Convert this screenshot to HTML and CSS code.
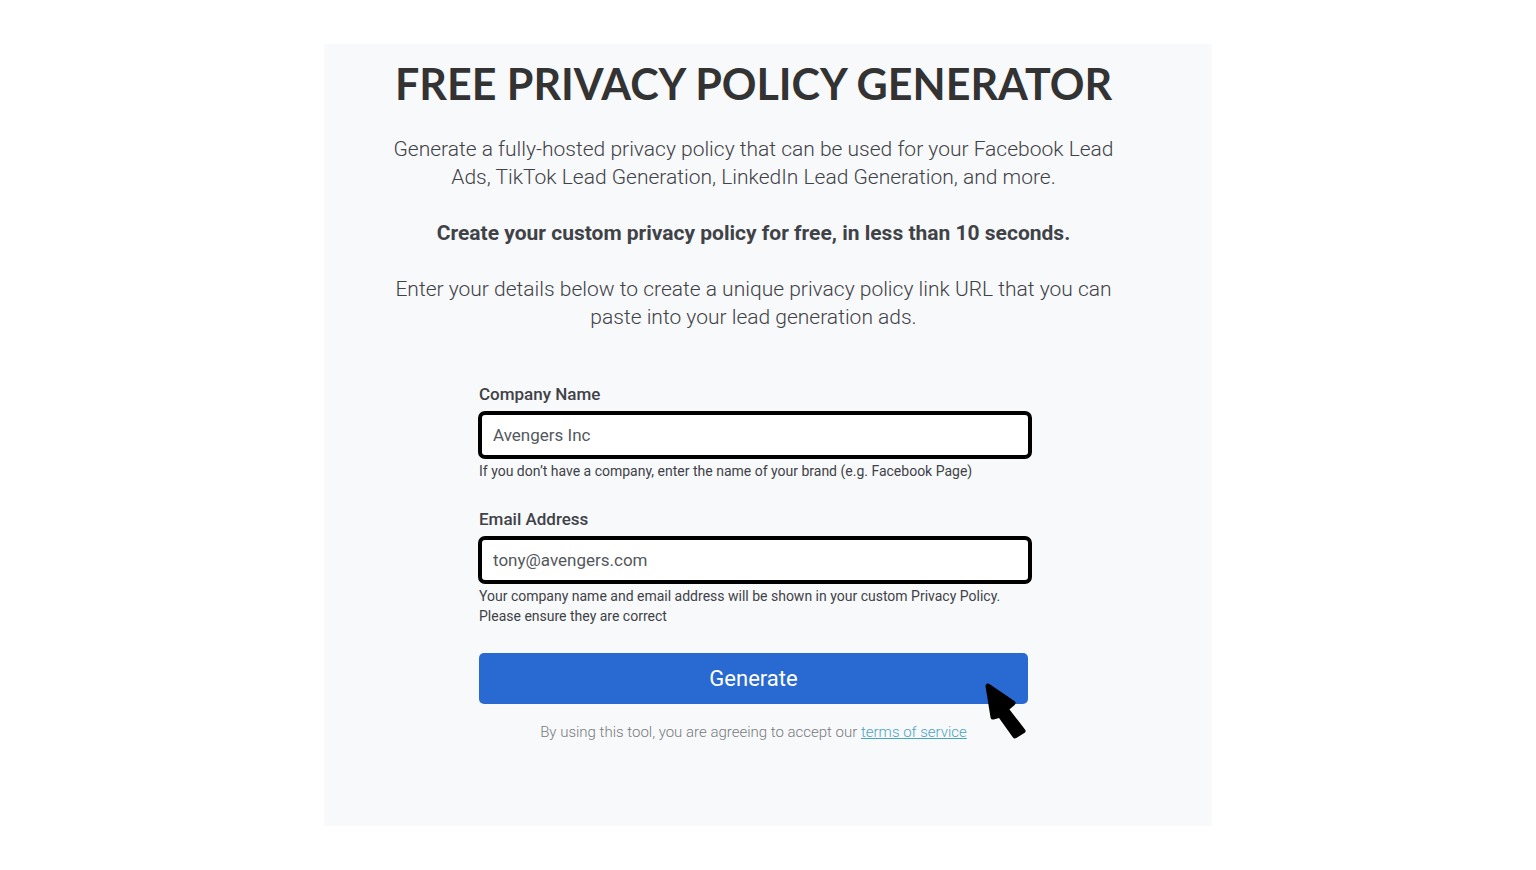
FILE: index.html
```
<!DOCTYPE html>
<html lang="en">
<head>
    <meta charset="UTF-8">
    <meta name="viewport" content="width=device-width, initial-scale=1">
    <title>Free Privacy Policy Generator</title>
    <link rel="stylesheet" href="styles.css">
</head>
<body>
    <main class="panel">
        <h1 class="title">FREE PRIVACY POLICY GENERATOR</h1>
        <div class="intro">
            <p>Generate a fully-hosted privacy policy that can be used for your Facebook Lead Ads, TikTok Lead Generation, LinkedIn Lead Generation, and more.</p>
            <p><strong>Create your custom privacy policy for free, in less than 10 seconds.</strong></p>
            <p>Enter your details below to create a unique privacy policy link URL that you can paste into your lead generation ads.</p>
        </div>
        <form class="form">
            <div class="field">
                <label for="company">Company Name</label>
                <input type="text" id="company" value="Avengers Inc" aria-describedby="company-hint">
                <p class="hint" id="company-hint">If you don’t have a company, enter the name of your brand (e.g. Facebook Page)</p>
            </div>
            <div class="field">
                <label for="email">Email Address</label>
                <input type="email" id="email" value="tony@avengers.com" aria-describedby="email-hint">
                <p class="hint" id="email-hint">Your company name and email address will be shown in your custom Privacy Policy. Please ensure they are correct</p>
            </div>
            <div class="submit">
                <button type="button" class="btn">Generate</button>
                <svg class="pointer" viewBox="0 0 42 56" aria-hidden="true">
                    <path d="M3 3 L28 20 L21 26 L38 48 L30 53 L15 32 L8 34 Z" fill="#000" stroke="#000" stroke-width="5" stroke-linejoin="round"/>
                </svg>
            </div>
            <p class="terms">By using this tool, you are agreeing to accept our <a href="#">terms of service</a></p>
        </form>
    </main>
</body>
</html>
```
FILE: styles.css
```
*{
    box-sizing: border-box;
}

body{
    margin: 0;
    padding: 44px 24px;
    background: #fff;
    color: #3f4247;
    font-family: Roboto, "Liberation Sans", sans-serif;
}

h1, p{
    margin: 0;
}

.panel{
    max-width: 888px;
    margin: 0 auto;
    padding: 14px 89px 82px 60px;
    background: #f8f9fb;
}

/* heading */
.title{
    color: #333;
    font-family: Lato, "Open Sans", sans-serif;
    font-size: 43px;
    font-weight: 700;
    line-height: 52px;
    text-align: center;
}

/* intro text */
.intro{
    margin-top: 25px;
    font-size: 21px;
    font-weight: 350;
    line-height: 28px;
    text-align: center;
}

.intro p + p{
    margin-top: 28px;
}

.intro strong{
    font-weight: 700;
}

/* form */
.form{
    max-width: 549px;
    margin: 51px auto 0;
}

.field{
    margin-bottom: 26px;
}

.field label{
    display: block;
    margin-bottom: 5px;
    font-size: 17px;
    font-weight: 500;
    line-height: 24px;
}

.field input{
    display: block;
    width: calc(100% + 5px);
    height: 48px;
    margin: 0 -4px 2px -1px;
    padding: 0 11px;
    border: 4px solid #000;
    border-radius: 7px;
    background: #fff;
    color: #54585d;
    font-family: inherit;
    font-size: 17px;
}

.hint{
    font-size: 14px;
    line-height: 20px;
}

.submit{
    position: relative;
    margin-top: 27px;
}

.btn{
    display: block;
    width: 100%;
    height: 51px;
    border: 0;
    border-radius: 5px;
    background: #2969d2;
    color: #fff;
    font-family: inherit;
    font-size: 22px;
}

/* mouse pointer lying over the button corner */
.pointer{
    position: absolute;
    top: 30px;
    right: 1px;
    width: 42px;
    height: 56px;
}

.terms{
    margin-top: 16px;
    color: #777b80;
    font-size: 15px;
    font-weight: 300;
    line-height: 24px;
    text-align: center;
}

.terms a{
    color: #4ba3c0;
}
```
